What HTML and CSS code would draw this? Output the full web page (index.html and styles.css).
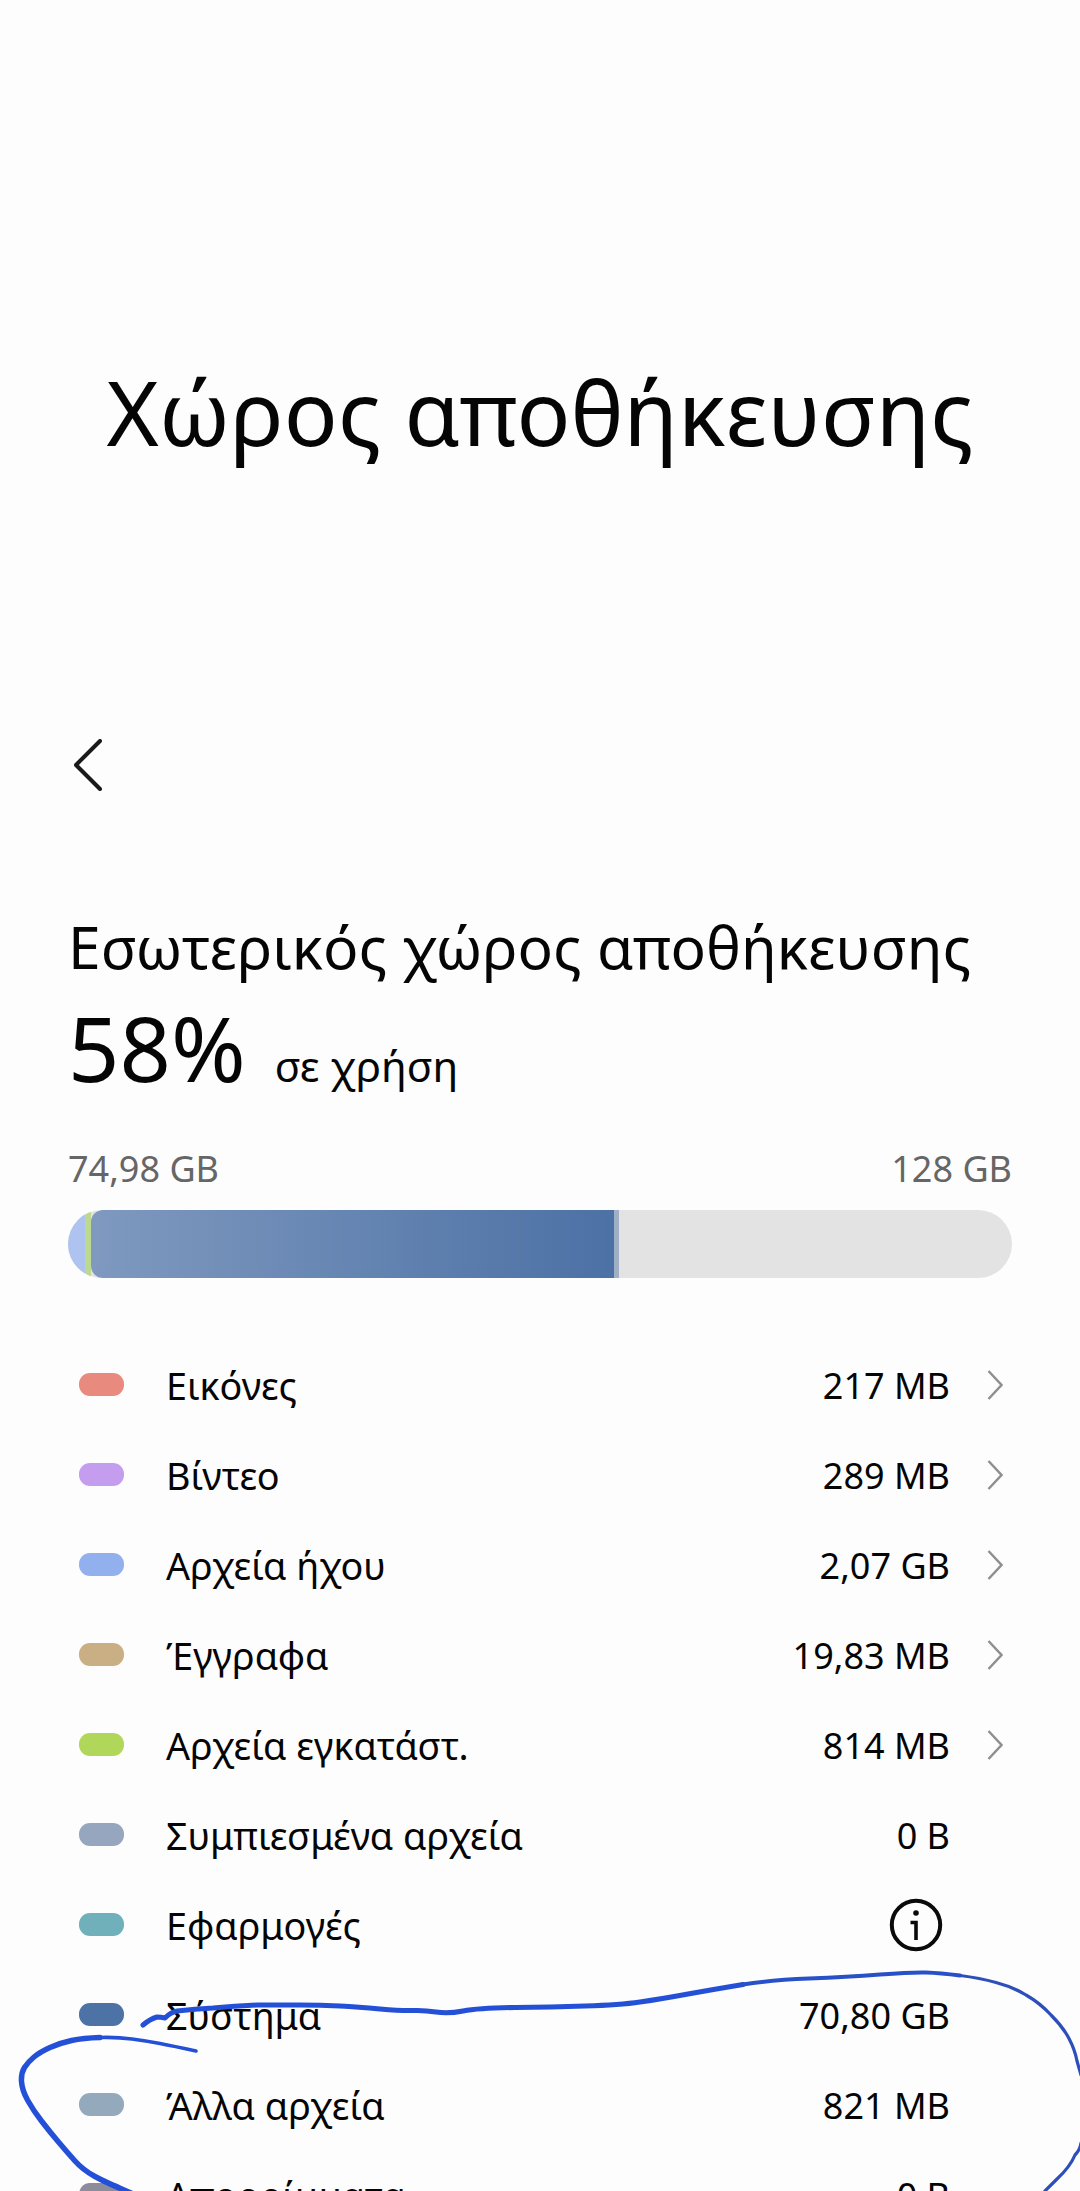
FILE: index.html
```html
<!DOCTYPE html>
<html lang="el">
<head>
<meta charset="utf-8">
<title>Χώρος αποθήκευσης</title>
<link rel="stylesheet" href="styles.css">
</head>
<body>
<div class="screen">
  <header class="hero"><h1 class="hero-title">Χώρος αποθήκευσης</h1></header>
  <nav class="nav">
    <svg class="back" width="28" height="52" viewBox="0 0 28 52"><path d="M26 2 2 26l24 24" fill="none" stroke="#1a1a1a" stroke-width="4" stroke-linecap="round" stroke-linejoin="round"/></svg>
  </nav>
  <section class="summary">
    <h2 class="summary-title">Εσωτερικός χώρος αποθήκευσης</h2>
    <div class="usage"><span class="usage-num">58%</span><span class="usage-label">σε χρήση</span></div>
    <div class="totals"><span>74,98 GB</span><span>128 GB</span></div>
    <div class="bar">
      <div class="seg seg-audio"></div>
      <div class="seg seg-apk"></div>
      <div class="seg seg-system"></div>
      <div class="seg seg-other"></div>
    </div>
  </section>
  <ul class="list">
    <li class="row"><i class="dot d1"></i><span class="name">Εικόνες</span><span class="val">217 MB</span><svg class="chev" width="16" height="30" viewBox="0 0 16 30"><path d="M1.5 1 14.5 15 1.5 29"/></svg></li>
    <li class="row"><i class="dot d2"></i><span class="name">Βίντεο</span><span class="val">289 MB</span><svg class="chev" width="16" height="30" viewBox="0 0 16 30"><path d="M1.5 1 14.5 15 1.5 29"/></svg></li>
    <li class="row"><i class="dot d3"></i><span class="name">Αρχεία ήχου</span><span class="val">2,07 GB</span><svg class="chev" width="16" height="30" viewBox="0 0 16 30"><path d="M1.5 1 14.5 15 1.5 29"/></svg></li>
    <li class="row"><i class="dot d4"></i><span class="name">Έγγραφα</span><span class="val">19,83 MB</span><svg class="chev" width="16" height="30" viewBox="0 0 16 30"><path d="M1.5 1 14.5 15 1.5 29"/></svg></li>
    <li class="row"><i class="dot d5"></i><span class="name">Αρχεία εγκατάστ.</span><span class="val">814 MB</span><svg class="chev" width="16" height="30" viewBox="0 0 16 30"><path d="M1.5 1 14.5 15 1.5 29"/></svg></li>
    <li class="row"><i class="dot d6"></i><span class="name">Συμπιεσμένα αρχεία</span><span class="val">0 B</span><span class="chev-space"></span></li>
    <li class="row"><i class="dot d7"></i><span class="name">Εφαρμογές</span><span class="info-wrap"><svg class="info" width="54" height="54" viewBox="0 0 54 54"><circle cx="27" cy="27" r="24.2" fill="none" stroke="#0a0a0a" stroke-width="4"/><circle cx="27" cy="15" r="2.8" fill="#0a0a0a"/><path d="M21.5 24.5H27V42" fill="none" stroke="#0a0a0a" stroke-width="3.6"/></svg></span><span class="chev-space"></span></li>
    <li class="row"><i class="dot d8"></i><span class="name">Σύστημα</span><span class="val">70,80 GB</span><span class="chev-space"></span></li>
    <li class="row"><i class="dot d9"></i><span class="name">Άλλα αρχεία</span><span class="val">821 MB</span><span class="chev-space"></span></li>
    <li class="row"><i class="dot d10"></i><span class="name">Απορρίμματα</span><span class="val">0 B</span><span class="chev-space"></span></li>
  </ul>
  <svg class="scribble" width="1080" height="2191" viewBox="0 0 1080 2191">
    <path class="ink ink-a" d="M143 2025Q150 2019 157 2017Q161 2017 165 2018Q171 2012 177 2011Q195 2009 213 2008Q235 2006 257 2005Q280 2005 300 2005Q320 2005 340 2006Q358 2007 380 2009Q403 2011 413 2010.5Q424 2010 436 2012Q448 2014 463 2011Q479 2008 515 2007.5Q551 2007 585 2006Q620 2005 640 2002Q661 1999 688 1994Q716 1989 743 1984.5"/>
    <path class="ink ink-m" d="M743 1984.5Q771 1980 809 1978.5Q847 1977 880 1974.5Q913 1972 926 1972.5Q940 1973 960 1975.5"/>
    <path class="ink ink-t" d="M196 2051Q173 2046 160 2043.5Q147 2041 132 2039Q117 2037 100 2037.5"/>
    <path class="ink ink-l" d="M100 2037.5Q83 2038 71.5 2040.5Q60 2043 50 2047.5Q40 2052 34 2057Q28 2062 24.5 2067.5Q21 2073 21.5 2081.5Q22 2090 27.5 2100Q33 2110 41.5 2121Q50 2132 58.5 2142Q67 2152 75 2161Q83 2170 95 2176.5Q107 2183 131 2193"/>
    <path class="ink ink-b" d="M960 1975.5Q980 1978 996 1982.5Q1013 1987 1026 1995Q1040 2003 1051 2015Q1063 2027 1069 2038.5Q1075 2050 1077 2061L1081 2075"/>
    <path class="ink ink-b" d="M1081 2143Q1080 2150 1075 2155Q1070 2167 1057 2179L1045 2191"/>
  </svg>
</div>
</body>
</html>
```
FILE: styles.css
```css
* { box-sizing: border-box; }
html, body { margin: 0; padding: 0; }
body { background: #fdfdfd; color: #050505; font-family: "Noto Sans", "Open Sans", sans-serif; }
.screen { position: relative; width: 1080px; height: 2191px; overflow: hidden; background: #fdfdfd; }
.hero { height: 739px; padding-top: 352px; display: flex; justify-content: center; }
.hero-title { margin: 0; font-size: 89.3px; font-weight: 400; line-height: 120px; white-space: nowrap; }
.nav { height: 167px; padding-left: 74px; }
.back { display: block; }
.summary { padding: 0 68px; }
.summary-title { margin: 0; font-size: 58.7px; font-weight: 400; line-height: 80px; white-space: nowrap; }
.usage { display: flex; align-items: baseline; gap: 29px; height: 110px; margin-top: 6px; }
.usage-num { font-size: 90px; line-height: 110px; }
.usage-label { font-size: 42.2px; }
.totals { display: flex; justify-content: space-between; font-size: 36px; line-height: 50px; color: #666; margin-top: 42px; margin-bottom: 16px; }
.bar { display: flex; height: 68px; border-radius: 34px; background: #e3e3e3; overflow: hidden; }
.seg { height: 100%; }
.seg-audio { width: 17px; background: #aec3f0; }
.seg-apk { width: 6px; background: #bcd98f; }
.seg-system { width: 523px; background: linear-gradient(90deg, #7f99bf, #4c71a5); border-radius: 12px 0 0 12px; }
.seg-other { width: 5px; background: #9fb0c6; }
.list { list-style: none; margin: 62px 0 0; padding: 0 77px 0 79px; }
.row { display: flex; align-items: center; height: 90px; font-size: 37.7px; }
.dot { width: 45px; height: 23px; border-radius: 11px; flex: none; margin-right: 42px; margin-bottom: 2px; }
.d1 { background: #e88a7d; }
.d2 { background: #c49def; }
.d3 { background: #92b0ee; }
.d4 { background: #caaf85; }
.d5 { background: #b0d75a; }
.d6 { background: #96a6bf; }
.d7 { background: #6fb0bb; }
.d8 { background: #4d72a6; }
.d9 { background: #94a9bc; }
.d10 { background: #8c8c9c; }
.name { flex: 1; white-space: nowrap; }
.val { white-space: nowrap; font-size: 36px; margin-right: -1px; }
.chev { flex: none; margin-left: 38px; fill: none; stroke: #8f8f8f; stroke-width: 2.5; }
.chev-space { flex: none; width: 54px; }
.info-wrap { display: flex; margin-right: 6px; }
.info { display: block; }
.scribble { position: absolute; left: 0; top: 0; pointer-events: none; }
.ink { fill: none; stroke: #2450d8; stroke-linecap: round; stroke-linejoin: round; }
.ink-a { stroke-width: 5; }
.ink-m { stroke-width: 4; stroke: #2850c8; }
.ink-t { stroke-width: 3.6; }
.ink-l { stroke-width: 5.5; }
.ink-b { stroke-width: 3.2; stroke: #2c4fba; }
```
